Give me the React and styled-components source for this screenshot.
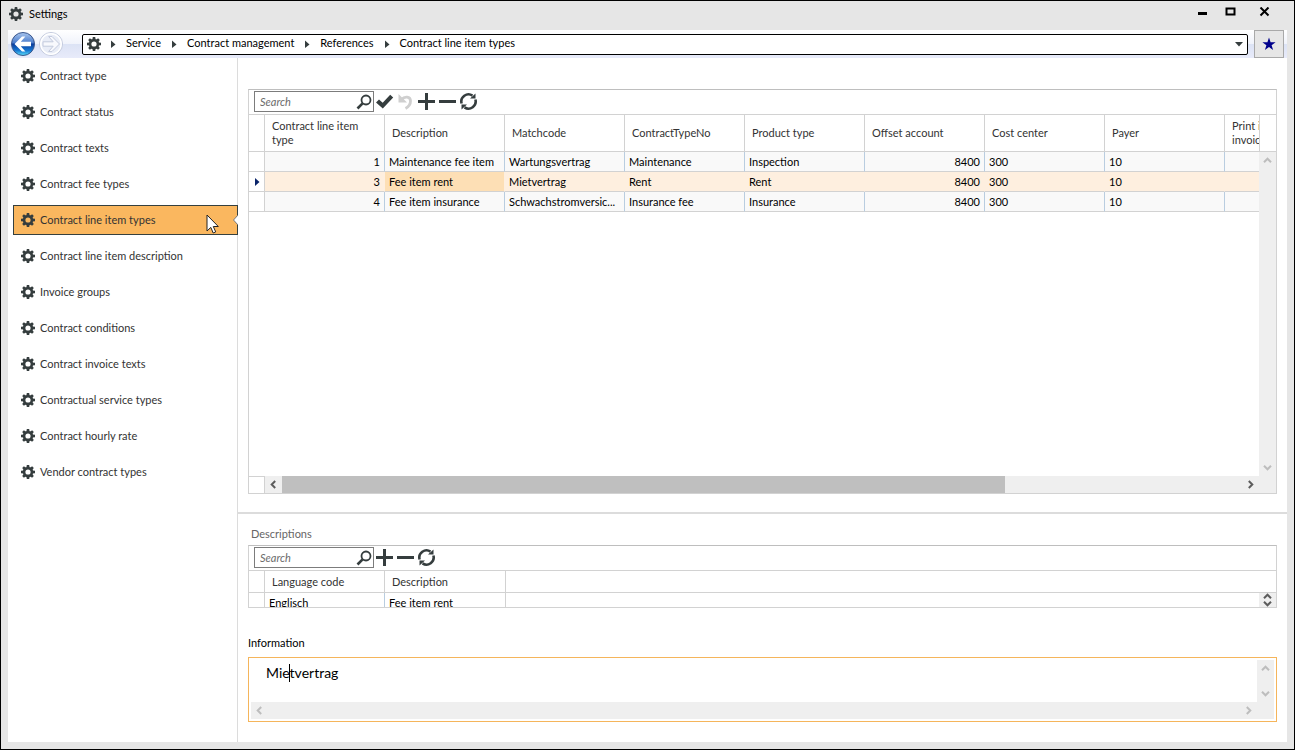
import React from 'react';
import styled, { createGlobalStyle, css } from 'styled-components';

const Global = createGlobalStyle`
  * { box-sizing: border-box; }
  body { margin: 0; font: 11px/14px Lato, "Liberation Sans", sans-serif; color: #000; }
  button, input, textarea { font: inherit; color: inherit; margin: 0; }
  button { border: 0; background: none; padding: 0; }
  svg { display: block; flex: none; }
`;

const Window = styled.div`
  min-height: 100vh;
  display: flex;
  flex-direction: column;
  background: #e6e6e6;
  border: 1px solid #000;
  padding: 0 7px 7px;
`;
const TitleBar = styled.header`
  height: 29px;
  flex: none;
  display: flex;
  justify-content: space-between;
  padding: 6px 14px 0 1px;
`;
const Title = styled.h1`
  display: flex;
  align-items: center;
  gap: 6px;
  height: 14px;
  margin: 0;
  font-size: 11px;
  font-weight: 400;
`;
const WindowButtons = styled.div`
  display: flex;
  gap: 16px;
  height: 10px;
`;
const NavBar = styled.nav`
  height: 28px;
  flex: none;
  display: flex;
  align-items: center;
  padding: 0 3px 0 1px;
  background: linear-gradient(#fff 0, #f0f3fb 50%, #dce3f5 51%, #e8ebfa 100%);
`;
const HistoryButtons = styled.div`
  display: flex;
  width: 73px;
  flex: none;
`;
const PathBox = styled.div`
  flex: 1;
  min-width: 0;
  height: 21px;
  display: flex;
  align-items: center;
  background: #fff;
  border: 1px solid #000;
  border-radius: 2px;
  padding: 0 4px;
`;
const Crumbs = styled.ol`
  display: flex;
  flex: 1;
  margin: 0;
  padding: 0 0 0 10px;
  list-style: none;
`;
const Crumb = styled.li`
  display: flex;
  align-items: center;
  gap: 10px;
  margin-right: 11px;
`;
const CrumbLink = styled.a`
  color: #000;
  text-decoration: none;
  white-space: nowrap;
  padding-bottom: 2px;
`;
const StarButton = styled.button`
  width: 30px;
  height: 28px;
  margin-left: 6px;
  display: grid;
  place-items: center;
  background: #e6e6e6;
  border: 1px solid #a9a9a9;
`;
const Body = styled.div`
  flex: 1;
  display: flex;
  background: #fff;
`;
const Sidebar = styled.aside`
  width: 230px;
  flex: none;
  border-right: 1px solid #dcdcdc;
`;
const Menu = styled.ul`
  margin: 0;
  padding: 3px 0 0 5px;
  list-style: none;
  display: flex;
  flex-direction: column;
  gap: 6px;
`;
const MenuItem = styled.li`
  position: relative;
  margin-right: -1px;
`;
const MenuLink = styled.a`
  display: flex;
  align-items: center;
  gap: 5px;
  height: 30px;
  padding: 0 7px;
  border: 1px solid ${p => (p.$active ? '#35403f' : 'transparent')};
  background: ${p => (p.$active ? '#fab75f' : 'transparent')};
  color: #333;
  text-decoration: none;
  white-space: nowrap;
`;
const Notch = styled.svg`
  position: absolute;
  right: 0;
  top: 10px;
`;
const Pointer = styled.svg`
  position: absolute;
  right: 19px;
  top: 9px;
`;
const Content = styled.main`
  flex: 1;
  min-width: 0;
  display: flex;
  flex-direction: column;
`;
const TopPane = styled.section`
  flex: 1;
  display: flex;
  flex-direction: column;
  padding: 31px 10px 18px;
  border-bottom: 2px solid #dcdcdc;
`;
const BottomPane = styled.section`
  display: flex;
  flex-direction: column;
  padding: 13px 10px 20px;
`;
const GroupTitle = styled.h2`
  margin: 0;
  padding-left: 3px;
  height: 18px;
  font-size: 11px;
  font-weight: 400;
  color: #666;
`;
const Grid = styled.div`
  flex: 1;
  display: flex;
  flex-direction: column;
  border: 1px solid #d2d2d2;
  border-top-color: #bebebe;
`;
const GridBar = styled.div`
  height: 25px;
  flex: none;
  display: flex;
  padding: 1px 5px 0;
  border-bottom: 1px solid #d2d2d2;
`;
const SearchBox = styled.label`
  width: 120px;
  height: 21px;
  display: flex;
  align-items: center;
  padding: 0 1px 0 5px;
  border: 1px solid #7c7c7c;
`;
const SearchInput = styled.input`
  flex: 1;
  min-width: 0;
  height: 16px;
  padding: 0;
  border: 0;
  outline: 0;
  background: none;
  font-style: italic;
  &::placeholder { color: #6c6c6c; opacity: 1; }
`;
const ToolButton = styled.button`
  width: 21px;
  height: 21px;
  display: grid;
  place-items: center;
`;
const GridMain = styled.div`
  flex: 1;
  display: flex;
  min-height: ${p => p.$min}px;
`;
const Viewport = styled.div`
  flex: 1;
  width: 0;
  overflow: hidden;
`;
const ClippedViewport = styled(Viewport)`
  height: 36px;
`;
const Table = styled.table`
  table-layout: fixed;
  width: ${p => p.$width};
  border-collapse: separate;
  border-spacing: 0;
`;
const HeadCell = styled.th`
  height: ${p => p.$height}px;
  padding: 0 7px;
  border-right: ${p => (p.$last ? 0 : 1)}px solid #d2d2d2;
  border-bottom: 1px solid #d2d2d2;
  font-weight: 400;
  text-align: left;
  white-space: pre-line;
  color: #333;
`;
const Row = styled.tr`
  background: ${p => (p.$selected ? '#feefdf' : p.$plain ? '#fff' : '#f9f9f9')};
`;
const Cell = styled.td`
  height: 20px;
  padding: 0 4px;
  border-right: ${p => (p.$last ? 0 : 1)}px solid ${p => (p.$noLine ? 'transparent' : p.$grey ? '#d2d2d2' : '#b9cde0')};
  border-bottom: 1px solid #d2d2d2;
  text-align: ${p => (p.$number ? 'right' : 'left')};
  white-space: nowrap;
  overflow: hidden;
  text-overflow: ellipsis;
  ${p => p.$focus && css`background: #fddfb5; background-clip: padding-box;`}
`;
const MarkCell = styled.td`
  padding: 0 0 0 6px;
  background: #fff;
  border-right: 1px solid #d2d2d2;
  border-bottom: 1px solid #d2d2d2;
`;
const Gutter = styled.div`
  width: 17px;
  flex: none;
  display: flex;
  flex-direction: column;
`;
const GutterHead = styled.div`
  height: ${p => p.$height}px;
  flex: none;
  border-left: ${p => (p.$line ? 1 : 0)}px solid #d2d2d2;
  border-bottom: 1px solid #d2d2d2;
`;
const VScroll = styled.div`
  flex: ${p => (p.$fixed ? 'none' : 1)};
  width: 17px;
  display: flex;
  flex-direction: column;
  align-items: center;
  justify-content: space-between;
  background: #efefef;
`;
const HScroll = styled.div`
  height: 17px;
  flex: ${p => (p.$fixed ? 'none' : 1)};
  display: flex;
  align-items: center;
  justify-content: space-between;
  padding-right: 17px;
  background: #efefef;
`;
const ScrollRow = styled.div`
  display: flex;
`;
const Corner = styled.div`
  width: 16px;
  height: 17px;
  border-top: 1px solid #d2d2d2;
  border-right: 1px solid #d2d2d2;
`;
const ScrollButton = styled.button`
  width: 17px;
  height: 17px;
  flex: none;
  display: grid;
  place-items: center;
`;
const Track = styled.div`
  flex: 1;
  height: 17px;
`;
const Thumb = styled.div`
  width: calc(75% + 3px);
  height: 17px;
  background: #bfbfbf;
`;
const InfoLabel = styled.label`
  margin-top: 28px;
  height: 21px;
`;
const InfoBox = styled.div`
  position: relative;
  height: 65px;
  display: flex;
  flex-direction: column;
  padding: 2px;
  border: 1px solid #f5b55b;
`;
const InfoMain = styled.div`
  flex: 1;
  display: flex;
`;
const InfoText = styled.textarea`
  flex: 1;
  min-width: 0;
  height: 42px;
  padding: 4px 15px;
  border: 0;
  outline: 0;
  resize: none;
  overflow: hidden;
  background: none;
  font-size: 14px;
  line-height: 18px;
`;
const Caret = styled.span`
  position: absolute;
  left: 40px;
  top: 6px;
  width: 1px;
  height: 18px;
  background: #000;
`;

const Gear = () => (
  <svg width="14" height="14" viewBox="0 0 14 14" aria-hidden="true">
    <circle cx="7" cy="7" r="3.9" fill="none" stroke="#353d3e" strokeWidth="2.6" />
    {[0, 45, 90, 135, 180, 225, 270, 315].map(a => (
      <path key={a} d="M5.4 2.6 5.8 0h2.4l.4 2.6z" fill="#353d3e" transform={`rotate(${a} 7 7)`} />
    ))}
  </svg>
);
const CrumbArrow = () => (
  <svg width="5" height="8" viewBox="0 0 5 8" aria-hidden="true"><path d="M0 0.5 4.5 4.5 0 8z" fill="#353d3e" /></svg>
);
const Chevron = ({ dir, dark, short }) => {
  const turn = { up: 0, right: 90, down: 180, left: 270 }[dir];
  return (
    <svg width="9" height={short ? 7 : 9} viewBox={short ? '0 1 9 7' : '0 0 9 9'} aria-hidden="true">
      <path d="M1 6.2 4.5 2.7 8 6.2" transform={`rotate(${turn} 4.5 4.5)`} fill="none" stroke={dark ? '#5c5c5c' : '#bdbdbd'} strokeWidth="2" />
    </svg>
  );
};
const HistoryArrows = ({ forward }) => (
  <svg width="28" height="28" viewBox="0 0 28 28" aria-hidden="true">
    <defs>
      <linearGradient id="ball" x1="0" y1="0" x2="0" y2="1">
        <stop offset="0" stopColor="#a9c6ee" /><stop offset=".45" stopColor="#4a7ccc" />
        <stop offset=".5" stopColor="#0a3c9c" /><stop offset=".78" stopColor="#1677d2" /><stop offset="1" stopColor="#5be0fa" />
      </linearGradient>
    </defs>
    <circle cx="14" cy="14" r="11.5" fill={forward ? '#e9edf7' : 'url(#ball)'} stroke={forward ? '#c3cadd' : '#3a568c'} />
    {forward && <circle cx="14" cy="14" r="10.2" fill="none" stroke="#fff" strokeWidth="1.400" />}
    <path d="M5.5 14 13 6.500h3.400L11.800 11.800H22v4.400H11.800l4.600 5.300H13z" transform={forward ? 'rotate(180 14 14)' : undefined} fill={forward ? '#f8f9fd' : '#fff'} stroke={forward ? '#c3cadd' : 'none'} />
  </svg>
);
const Icon = ({ name }) => {
  const dark = '#353d3e';
  return (
    <svg width="19" height="19" viewBox="0 0 19 19" aria-hidden="true">
      {name === 'check' && <path d="M1 10.500 4 7.500l3.700 3.300L15.200 2.800 18.200 5.600 7.800 16.500z" fill={dark} />}
      {name === 'undo' && (
        <g>
          <path d="M5.500 7.500C8.500 4 14.500 4.200 14.500 9c0 3.500-2 5.800-5 7.500" fill="none" stroke="#cfcfcf" strokeWidth="2.800" />
          <path d="M2.500 2v8.500H11z" fill="#cfcfcf" />
        </g>
      )}
      {name === 'plus' && <path d="M1 8h7V1h3v7h7v3h-7v7H8v-7H1z" fill={dark} />}
      {name === 'minus' && <path d="M1 8h17v3H1z" fill={dark} />}
      {name === 'refresh' && (
        <g>
          <path d="M2.600 11.500A7.200 7.200 0 0 1 13.500 3.600M16.400 7.500A7.200 7.200 0 0 1 5.500 15.400" fill="none" stroke={dark} strokeWidth="2.600" />
          <path d="M16.500 1.500v5h-5.500zM2.500 17.500v-5H8z" fill={dark} />
        </g>
      )}
    </svg>
  );
};
const Magnifier = () => (
  <svg width="16" height="16" viewBox="0 0 16 16" aria-hidden="true">
    <circle cx="10" cy="6" r="4.500" fill="none" stroke="#353d3e" strokeWidth="1.800" />
    <path d="M6.600 9.400 1.500 14.500" stroke="#353d3e" strokeWidth="2.600" />
  </svg>
);

const Search = () => (
  <SearchBox>
    <SearchInput type="text" placeholder="Search" aria-label="Search" />
    <Magnifier />
  </SearchBox>
);
const GridTools = ({ tools }) => (
  <GridBar>
    <Search />
    {tools.map(t => <ToolButton key={t} type="button" aria-label={t}><Icon name={t} /></ToolButton>)}
  </GridBar>
);
const Arrow = ({ dir, dark }) => (
  <ScrollButton type="button" aria-label={`Scroll ${dir}`}><Chevron dir={dir} dark={dark} /></ScrollButton>
);

const menu = ['Contract type', 'Contract status', 'Contract texts', 'Contract fee types', 'Contract line item types',
  'Contract line item description', 'Invoice groups', 'Contract conditions', 'Contract invoice texts',
  'Contractual service types', 'Contract hourly rate', 'Vendor contract types'];
const crumbs = ['Service', 'Contract management', 'References', 'Contract line item types'];
const columns = ['Contract line item type', 'Description', 'Matchcode', 'ContractTypeNo', 'Product type', 'Offset account',
  'Cost center', 'Payer', 'Print in\ninvoice'];
const rows = [
  ['1', 'Maintenance fee item', 'Wartungsvertrag', 'Maintenance', 'Inspection', '8400', '300', '10', ''],
  ['3', 'Fee item rent', 'Mietvertrag', 'Rent', 'Rent', '8400', '300', '10', ''],
  ['4', 'Fee item insurance', 'Schwachstromversic...', 'Insurance fee', 'Insurance', '8400', '300', '10', ''],
];

export default function App() {
  return (
    <Window>
      <Global />
      <TitleBar>
        <Title><Gear />Settings</Title>
        <WindowButtons>
          <button type="button" aria-label="Minimize"><svg width="12" height="10"><path d="M1 5h9v3H1z" /></svg></button>
          <button type="button" aria-label="Maximize"><svg width="12" height="10"><path d="M1.500 1.500h8v6h-8z" fill="none" stroke="#000" strokeWidth="2" /></svg></button>
          <button type="button" aria-label="Close"><svg width="20" height="10"><path d="m7.500.5 8 8m0-8-8 8" stroke="#000" strokeWidth="2" /></svg></button>
        </WindowButtons>
      </TitleBar>
      <NavBar>
        <HistoryButtons>
          <button type="button" aria-label="Back"><HistoryArrows /></button>
          <button type="button" aria-label="Forward"><HistoryArrows forward /></button>
        </HistoryButtons>
        <PathBox>
          <Gear />
          <Crumbs>
            {crumbs.map(c => <Crumb key={c}><CrumbArrow /><CrumbLink href="#">{c}</CrumbLink></Crumb>)}
          </Crumbs>
          <button type="button" aria-label="History"><svg width="8" height="5"><path d="M0 0h8L4 4.500z" fill="#353d3e" /></svg></button>
        </PathBox>
        <StarButton type="button" aria-label="Favourite">
          <svg width="14" height="14" viewBox="0 0 14 14"><path d="m7 .5 1.600 4.700h5L9.600 8.200l1.500 4.900L7 10.100l-4.100 3 1.500-4.900L.4 5.200h5z" fill="#00008b" /></svg>
        </StarButton>
      </NavBar>
      <Body>
        <Sidebar>
          <Menu>
            {menu.map((m, i) => (
              <MenuItem key={m}>
                <MenuLink href="#" $active={i === 4}><Gear />{m}</MenuLink>
                {i === 4 && (
                  <>
                    <Notch width="5" height="10" viewBox="0 0 5 10"><path d="M5 0 .5 5 5 10" fill="#fff" stroke="#777" /></Notch>
                    <Pointer width="13" height="20" viewBox="0 0 13 20"><path d="M1 1v16l3.800-3.600L7.200 19l2.500-1.100-2.400-5.400h5z" fill="#fff" stroke="#222" /></Pointer>
                  </>
                )}
              </MenuItem>
            ))}
          </Menu>
        </Sidebar>
        <Content>
          <TopPane>
            <Grid>
              <GridTools tools={['check', 'undo', 'plus', 'minus', 'refresh']} />
              <GridMain $min={120}>
                <Viewport>
                  <Table $width="1096px">
                    <colgroup><col width="16" />{columns.map(c => <col key={c} width="120" />)}</colgroup>
                    <thead>
                      <tr><HeadCell $height={37} />{columns.map(c => <HeadCell key={c} $height={37}>{c}</HeadCell>)}</tr>
                    </thead>
                    <tbody>
                      {rows.map((r, i) => (
                        <Row key={r[0]} $selected={i === 1}>
                          <MarkCell>{i === 1 && <svg width="5" height="8"><path d="M0 0 4.500 4 0 8z" fill="#0a246a" /></svg>}</MarkCell>
                          {r.map((v, j) => (
                            <Cell key={j} $number={j === 0 || j === 5} $noLine={i === 1} $focus={i === 1 && j === 1}>{v}</Cell>
                          ))}
                        </Row>
                      ))}
                    </tbody>
                  </Table>
                </Viewport>
                <Gutter>
                  <GutterHead $height={37} $line />
                  <VScroll><Arrow dir="up" /><Arrow dir="down" /></VScroll>
                </Gutter>
              </GridMain>
              <ScrollRow>
                <Corner />
                <HScroll>
                  <Arrow dir="left" dark />
                  <Track><Thumb /></Track>
                  <Arrow dir="right" dark />
                </HScroll>
              </ScrollRow>
            </Grid>
          </TopPane>
          <BottomPane>
            <GroupTitle>Descriptions</GroupTitle>
            <Grid>
              <GridTools tools={['plus', 'minus', 'refresh']} />
              <GridMain $min={36}>
                <ClippedViewport>
                  <Table $width="100%">
                    <colgroup><col width="16" /><col width="120" /><col width="121" /><col /></colgroup>
                    <thead>
                      <tr>
                        <HeadCell $height={22} />
                        <HeadCell $height={22}>Language code</HeadCell>
                        <HeadCell $height={22}>Description</HeadCell>
                        <HeadCell $height={22} $last />
                      </tr>
                    </thead>
                    <tbody>
                      <Row $plain><MarkCell /><Cell>Englisch</Cell><Cell $grey>Fee item rent</Cell><Cell $last /></Row>
                    </tbody>
                  </Table>
                </ClippedViewport>
                <Gutter>
                  <GutterHead $height={22} />
                  <VScroll><Chevron dir="up" dark short /><Chevron dir="down" dark short /></VScroll>
                </Gutter>
              </GridMain>
            </Grid>
            <InfoLabel htmlFor="information">Information</InfoLabel>
            <InfoBox>
              <InfoMain>
                <InfoText id="information" defaultValue="Mietvertrag" spellCheck={false} />
                <VScroll $fixed><Arrow dir="up" /><Arrow dir="down" /></VScroll>
              </InfoMain>
              <HScroll $fixed><Arrow dir="left" /><Arrow dir="right" /></HScroll>
              <Caret />
            </InfoBox>
          </BottomPane>
        </Content>
      </Body>
    </Window>
  );
}
